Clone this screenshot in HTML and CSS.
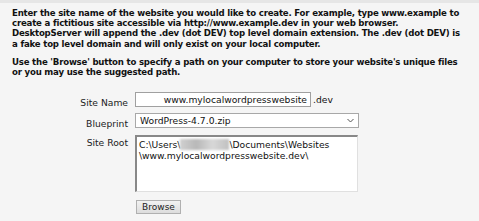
FILE: index.html
```html
<!DOCTYPE html>
<html lang="en">
<head>
    <meta charset="UTF-8">
    <meta name="viewport" content="width=device-width, initial-scale=1.0">
    <title>Create Site</title>
    <link rel="stylesheet" href="styles.css">
</head>
<body>
    <div class="container">
        <p class="intro">Enter the site name of the website you would like to create. For example, type www.example to<br>create a fictitious site accessible via http://www.example.dev in your web browser.<br>DesktopServer will append the .dev (dot DEV) top level domain extension. The .dev (dot DEV) is<br>a fake top level domain and will only exist on your local computer.</p>
        <p class="intro">Use the 'Browse' button to specify a path on your computer to store your website's unique files<br>or you may use the suggested path.</p>

        <div class="form">
            <label class="label">Site Name</label>
            <div class="field">
                <div class="input">www.mylocalwordpresswebsite</div>
                <span class="suffix">.dev</span>
            </div>

            <label class="label">Blueprint</label>
            <div class="field">
                <div class="select">
                    <span>WordPress-4.7.0.zip</span>
                    <svg class="chevron" width="7" height="5" viewBox="0 0 7 5"><path d="M0.5 1 L3.5 4 L6.5 1" fill="none" stroke="#555" stroke-width="1"/></svg>
                </div>
            </div>

            <label class="label label-top">Site Root</label>
            <div class="field">
                <div class="textarea">C:\Users\<span class="blur">xxxxxxxxx</span>\Documents\Websites<br>\www.mylocalwordpresswebsite.dev\</div>
            </div>

            <span></span>
            <div class="field">
                <button class="button">Browse</button>
            </div>
        </div>
    </div>
</body>
</html>
```

FILE: styles.css
```css
body {
    margin: 0;
    background-color: #f5f5f5;
    font-family: "DejaVu Sans", Verdana, sans-serif;
    color: #111;
}
.container {
    border-top: 3px solid #e6e6e6;
    padding: 5px 12px 0 12px;
}
.intro {
    margin: 0 0 8px 0;
    font-size: 8.6px;
    font-weight: bold;
    letter-spacing: -0.2px;
    line-height: 10.2px;
    white-space: nowrap;
}
.form {
    display: grid;
    grid-template-columns: 116px auto;
    column-gap: 7px;
    margin-top: 15px;
    font-size: 9.2px;
}
.label {
    text-align: right;
    align-self: center;
    color: #222;
}
.label-top {
    align-self: start;
    padding-top: 3px;
}
.field {
    display: flex;
    align-items: center;
    margin-bottom: 6px;
}
.input {
    width: 168px;
    height: 13px;
    line-height: 13px;
    padding: 0 3px;
    border: 1px solid #a0a0a0;
    background: #fff;
    text-align: right;
    white-space: nowrap;
    overflow: hidden;
}
.suffix {
    margin-left: 2px;
}
.select {
    width: 214px;
    height: 13px;
    padding: 0 4px;
    border: 1px solid #a8a8a8;
    background: #fff;
    display: flex;
    align-items: center;
    justify-content: space-between;
}
.textarea {
    width: 216px;
    height: 50px;
    margin-top: 1px;
    padding: 2px 2px;
    border-top: 2px solid #888;
    border-left: 2px solid #888;
    border-right: 1px solid #e0e0e0;
    border-bottom: 1px solid #e0e0e0;
    background: #fff;
    line-height: 11px;
}
.blur {
    color: transparent;
    background: linear-gradient(90deg, #d0d0d0, #b8b8b8, #d8d8d8, #c0c0c0);
    filter: blur(1px);
}
.button {
    width: 45px;
    height: 14px;
    padding: 0;
    margin-left: 1px;
    margin-top: 2px;
    font-family: "DejaVu Sans", Verdana, sans-serif;
    font-size: 9px;
    color: #222;
    border: 1px solid #b0b0b0;
    background: linear-gradient(#f2f2f2, #dcdcdc);
}
```
